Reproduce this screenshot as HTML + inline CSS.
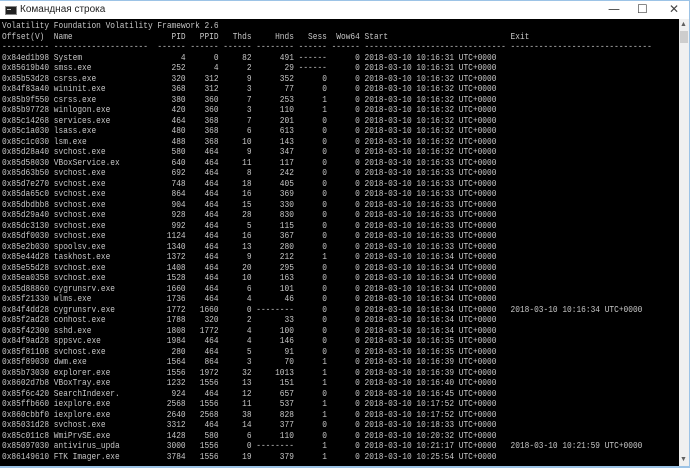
<!DOCTYPE html>
<html><head><meta charset="utf-8"><style>
*{margin:0;padding:0;box-sizing:border-box}
body{width:690px;height:468px;overflow:hidden;background:#fff;position:relative;font-family:"Liberation Sans","Noto Sans CJK SC",sans-serif}
#tb{position:absolute;left:0;top:0;width:690px;height:19px;background:#fff;border-top:1px solid #9cc3e6}
#ico{position:absolute;left:5px;top:5px;width:12px;height:9px;background:#222;border:1px solid #888}
#ico:after{content:"";position:absolute;left:1px;top:2px;width:4px;height:1px;background:#ccc}
#tt{position:absolute;left:20px;top:3px;font-size:10px;color:#222}
.ctl{position:absolute;top:1px;font-size:12px;color:#444;font-family:"DejaVu Sans",sans-serif}
#con{position:absolute;left:0;top:19px;width:679px;height:448px;background:#000;overflow:hidden}
#sb{position:absolute;left:679px;top:19px;width:10px;height:448px;background:#f0f0f0}
#th{position:absolute;left:680px;top:31px;width:8px;height:12px;background:#cdcdcd}
.ar{position:absolute;left:680px;font-size:7px;color:#606060}
#rb{position:absolute;left:689px;top:0;width:1px;height:468px;background:#9cc3e6}
#bb{position:absolute;left:0;top:466px;width:690px;height:2px;background:#9cc3e6}
#txt{position:absolute;left:2px;top:2px;transform-origin:0 0;transform:scaleX(0.826);font-family:"Liberation Mono",monospace;font-size:9.5px;color:#c6c6c6;white-space:nowrap;width:900px}
#txt div{height:10.5px;line-height:10.5px;white-space:nowrap}
i{font-style:normal;display:inline-block;white-space:pre}
.o{width:11ch}.n{width:21ch}.p{width:7ch;text-align:right}.h{width:9ch;text-align:right}.s{width:31ch;padding-left:1ch}
</style></head><body>
<div id="tb"><div id="ico"></div><div id="tt">Командная строка</div>
<div class="ctl" style="left:608px">&#8212;</div>
<div class="ctl" style="left:637px">&#9744;</div>
<div class="ctl" style="left:669px">&#10005;</div></div>
<div id="con"><div id="txt"><div>Volatility Foundation Volatility Framework 2.6</div><div><i class="o">Offset(V)</i><i class="n">Name</i><i class="p">PID</i><i class="p">PPID</i><i class="p">Thds</i><i class="h">Hnds</i><i class="p">Sess</i><i class="p">Wow64</i><i class="s">Start</i><i class="s">Exit</i></div><div><i class="o">----------</i><i class="n">--------------------</i><i class="p">------</i><i class="p">------</i><i class="p">------</i><i class="h">--------</i><i class="p">------</i><i class="p">------</i><i class="s">------------------------------</i><i class="s">------------------------------</i></div><div><i class="o">0x84ed1b98</i><i class="n">System</i><i class="p">4</i><i class="p">0</i><i class="p">82</i><i class="h">491</i><i class="p">------</i><i class="p">0</i><i class="s">2018-03-10 10:16:31 UTC+0000</i></div><div><i class="o">0x85619b40</i><i class="n">smss.exe</i><i class="p">252</i><i class="p">4</i><i class="p">2</i><i class="h">29</i><i class="p">------</i><i class="p">0</i><i class="s">2018-03-10 10:16:31 UTC+0000</i></div><div><i class="o">0x85b53d28</i><i class="n">csrss.exe</i><i class="p">320</i><i class="p">312</i><i class="p">9</i><i class="h">352</i><i class="p">0</i><i class="p">0</i><i class="s">2018-03-10 10:16:32 UTC+0000</i></div><div><i class="o">0x84f83a40</i><i class="n">wininit.exe</i><i class="p">368</i><i class="p">312</i><i class="p">3</i><i class="h">77</i><i class="p">0</i><i class="p">0</i><i class="s">2018-03-10 10:16:32 UTC+0000</i></div><div><i class="o">0x85b9f550</i><i class="n">csrss.exe</i><i class="p">380</i><i class="p">360</i><i class="p">7</i><i class="h">253</i><i class="p">1</i><i class="p">0</i><i class="s">2018-03-10 10:16:32 UTC+0000</i></div><div><i class="o">0x85b97728</i><i class="n">winlogon.exe</i><i class="p">420</i><i class="p">360</i><i class="p">3</i><i class="h">110</i><i class="p">1</i><i class="p">0</i><i class="s">2018-03-10 10:16:32 UTC+0000</i></div><div><i class="o">0x85c14268</i><i class="n">services.exe</i><i class="p">464</i><i class="p">368</i><i class="p">7</i><i class="h">201</i><i class="p">0</i><i class="p">0</i><i class="s">2018-03-10 10:16:32 UTC+0000</i></div><div><i class="o">0x85c1a030</i><i class="n">lsass.exe</i><i class="p">480</i><i class="p">368</i><i class="p">6</i><i class="h">613</i><i class="p">0</i><i class="p">0</i><i class="s">2018-03-10 10:16:32 UTC+0000</i></div><div><i class="o">0x85c1c030</i><i class="n">lsm.exe</i><i class="p">488</i><i class="p">368</i><i class="p">10</i><i class="h">143</i><i class="p">0</i><i class="p">0</i><i class="s">2018-03-10 10:16:32 UTC+0000</i></div><div><i class="o">0x85d28a40</i><i class="n">svchost.exe</i><i class="p">580</i><i class="p">464</i><i class="p">9</i><i class="h">347</i><i class="p">0</i><i class="p">0</i><i class="s">2018-03-10 10:16:32 UTC+0000</i></div><div><i class="o">0x85d58030</i><i class="n">VBoxService.ex</i><i class="p">640</i><i class="p">464</i><i class="p">11</i><i class="h">117</i><i class="p">0</i><i class="p">0</i><i class="s">2018-03-10 10:16:33 UTC+0000</i></div><div><i class="o">0x85d63b50</i><i class="n">svchost.exe</i><i class="p">692</i><i class="p">464</i><i class="p">8</i><i class="h">242</i><i class="p">0</i><i class="p">0</i><i class="s">2018-03-10 10:16:33 UTC+0000</i></div><div><i class="o">0x85d7e270</i><i class="n">svchost.exe</i><i class="p">748</i><i class="p">464</i><i class="p">18</i><i class="h">405</i><i class="p">0</i><i class="p">0</i><i class="s">2018-03-10 10:16:33 UTC+0000</i></div><div><i class="o">0x85da65c0</i><i class="n">svchost.exe</i><i class="p">864</i><i class="p">464</i><i class="p">16</i><i class="h">369</i><i class="p">0</i><i class="p">0</i><i class="s">2018-03-10 10:16:33 UTC+0000</i></div><div><i class="o">0x85dbdbb8</i><i class="n">svchost.exe</i><i class="p">904</i><i class="p">464</i><i class="p">15</i><i class="h">330</i><i class="p">0</i><i class="p">0</i><i class="s">2018-03-10 10:16:33 UTC+0000</i></div><div><i class="o">0x85d29a40</i><i class="n">svchost.exe</i><i class="p">928</i><i class="p">464</i><i class="p">28</i><i class="h">830</i><i class="p">0</i><i class="p">0</i><i class="s">2018-03-10 10:16:33 UTC+0000</i></div><div><i class="o">0x85dc3130</i><i class="n">svchost.exe</i><i class="p">992</i><i class="p">464</i><i class="p">5</i><i class="h">115</i><i class="p">0</i><i class="p">0</i><i class="s">2018-03-10 10:16:33 UTC+0000</i></div><div><i class="o">0x85df0030</i><i class="n">svchost.exe</i><i class="p">1124</i><i class="p">464</i><i class="p">16</i><i class="h">367</i><i class="p">0</i><i class="p">0</i><i class="s">2018-03-10 10:16:33 UTC+0000</i></div><div><i class="o">0x85e2b030</i><i class="n">spoolsv.exe</i><i class="p">1340</i><i class="p">464</i><i class="p">13</i><i class="h">280</i><i class="p">0</i><i class="p">0</i><i class="s">2018-03-10 10:16:33 UTC+0000</i></div><div><i class="o">0x85e44d28</i><i class="n">taskhost.exe</i><i class="p">1372</i><i class="p">464</i><i class="p">9</i><i class="h">212</i><i class="p">1</i><i class="p">0</i><i class="s">2018-03-10 10:16:34 UTC+0000</i></div><div><i class="o">0x85e55d28</i><i class="n">svchost.exe</i><i class="p">1408</i><i class="p">464</i><i class="p">20</i><i class="h">295</i><i class="p">0</i><i class="p">0</i><i class="s">2018-03-10 10:16:34 UTC+0000</i></div><div><i class="o">0x85ea0358</i><i class="n">svchost.exe</i><i class="p">1528</i><i class="p">464</i><i class="p">10</i><i class="h">163</i><i class="p">0</i><i class="p">0</i><i class="s">2018-03-10 10:16:34 UTC+0000</i></div><div><i class="o">0x85d88860</i><i class="n">cygrunsrv.exe</i><i class="p">1660</i><i class="p">464</i><i class="p">6</i><i class="h">101</i><i class="p">0</i><i class="p">0</i><i class="s">2018-03-10 10:16:34 UTC+0000</i></div><div><i class="o">0x85f21330</i><i class="n">wlms.exe</i><i class="p">1736</i><i class="p">464</i><i class="p">4</i><i class="h">46</i><i class="p">0</i><i class="p">0</i><i class="s">2018-03-10 10:16:34 UTC+0000</i></div><div><i class="o">0x84f4dd28</i><i class="n">cygrunsrv.exe</i><i class="p">1772</i><i class="p">1660</i><i class="p">0</i><i class="h">--------</i><i class="p">0</i><i class="p">0</i><i class="s">2018-03-10 10:16:34 UTC+0000</i><i class="s">2018-03-10 10:16:34 UTC+0000</i></div><div><i class="o">0x85f2ad28</i><i class="n">conhost.exe</i><i class="p">1788</i><i class="p">320</i><i class="p">2</i><i class="h">33</i><i class="p">0</i><i class="p">0</i><i class="s">2018-03-10 10:16:34 UTC+0000</i></div><div><i class="o">0x85f42300</i><i class="n">sshd.exe</i><i class="p">1808</i><i class="p">1772</i><i class="p">4</i><i class="h">100</i><i class="p">0</i><i class="p">0</i><i class="s">2018-03-10 10:16:34 UTC+0000</i></div><div><i class="o">0x84f9ad28</i><i class="n">sppsvc.exe</i><i class="p">1984</i><i class="p">464</i><i class="p">4</i><i class="h">146</i><i class="p">0</i><i class="p">0</i><i class="s">2018-03-10 10:16:35 UTC+0000</i></div><div><i class="o">0x85f81108</i><i class="n">svchost.exe</i><i class="p">280</i><i class="p">464</i><i class="p">5</i><i class="h">91</i><i class="p">0</i><i class="p">0</i><i class="s">2018-03-10 10:16:35 UTC+0000</i></div><div><i class="o">0x85f89030</i><i class="n">dwm.exe</i><i class="p">1564</i><i class="p">864</i><i class="p">3</i><i class="h">70</i><i class="p">1</i><i class="p">0</i><i class="s">2018-03-10 10:16:39 UTC+0000</i></div><div><i class="o">0x85b73030</i><i class="n">explorer.exe</i><i class="p">1556</i><i class="p">1972</i><i class="p">32</i><i class="h">1013</i><i class="p">1</i><i class="p">0</i><i class="s">2018-03-10 10:16:39 UTC+0000</i></div><div><i class="o">0x8602d7b8</i><i class="n">VBoxTray.exe</i><i class="p">1232</i><i class="p">1556</i><i class="p">13</i><i class="h">151</i><i class="p">1</i><i class="p">0</i><i class="s">2018-03-10 10:16:40 UTC+0000</i></div><div><i class="o">0x85f6c420</i><i class="n">SearchIndexer.</i><i class="p">924</i><i class="p">464</i><i class="p">12</i><i class="h">657</i><i class="p">0</i><i class="p">0</i><i class="s">2018-03-10 10:16:45 UTC+0000</i></div><div><i class="o">0x85ffb660</i><i class="n">iexplore.exe</i><i class="p">2568</i><i class="p">1556</i><i class="p">11</i><i class="h">537</i><i class="p">1</i><i class="p">0</i><i class="s">2018-03-10 10:17:52 UTC+0000</i></div><div><i class="o">0x860cbbf0</i><i class="n">iexplore.exe</i><i class="p">2640</i><i class="p">2568</i><i class="p">38</i><i class="h">828</i><i class="p">1</i><i class="p">0</i><i class="s">2018-03-10 10:17:52 UTC+0000</i></div><div><i class="o">0x85031d28</i><i class="n">svchost.exe</i><i class="p">3312</i><i class="p">464</i><i class="p">14</i><i class="h">377</i><i class="p">0</i><i class="p">0</i><i class="s">2018-03-10 10:18:33 UTC+0000</i></div><div><i class="o">0x85c011c8</i><i class="n">WmiPrvSE.exe</i><i class="p">1428</i><i class="p">580</i><i class="p">6</i><i class="h">110</i><i class="p">0</i><i class="p">0</i><i class="s">2018-03-10 10:20:32 UTC+0000</i></div><div><i class="o">0x85097030</i><i class="n">antivirus_upda</i><i class="p">3000</i><i class="p">1556</i><i class="p">0</i><i class="h">--------</i><i class="p">1</i><i class="p">0</i><i class="s">2018-03-10 10:21:17 UTC+0000</i><i class="s">2018-03-10 10:21:59 UTC+0000</i></div><div><i class="o">0x86149610</i><i class="n">FTK Imager.exe</i><i class="p">3784</i><i class="p">1556</i><i class="p">19</i><i class="h">379</i><i class="p">1</i><i class="p">0</i><i class="s">2018-03-10 10:25:54 UTC+0000</i></div></div></div>
<div id="sb"></div><div id="th"></div>
<div class="ar" style="top:21px">&#9650;</div>
<div class="ar" style="top:456px">&#9660;</div>
<div id="rb"></div><div id="bb"></div>
</body></html>
